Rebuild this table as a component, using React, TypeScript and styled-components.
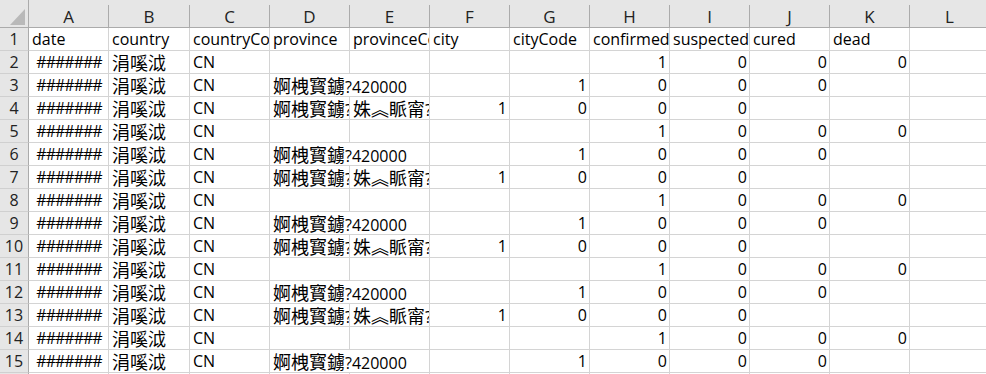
import styled, { createGlobalStyle } from "styled-components";

const GlobalStyle = createGlobalStyle`
  html, body {
    margin: 0;
    padding: 0;
    background: #ffffff;
    overflow: hidden;
  }
  body {
    font-family: "Open Sans", "Noto Sans CJK SC", sans-serif;
    color: #000000;
  }
`;

const COLUMNS = ["A", "B", "C", "D", "E", "F", "G", "H", "I", "J", "K", "L"];

type Align = "left" | "right" | "center";

type CellData = {
  text: string;
  align?: Align;
  span?: number;
  hash?: boolean;
};

type Row = Record<string, CellData>;

const HEADER: Row = {
  A: { text: "date" },
  B: { text: "country" },
  C: { text: "countryCode" },
  D: { text: "province" },
  E: { text: "provinceCode" },
  F: { text: "city" },
  G: { text: "cityCode" },
  H: { text: "confirmed" },
  I: { text: "suspected" },
  J: { text: "cured" },
  K: { text: "dead" },
};

const num = (text: string): CellData => ({ text, align: "right" });

const base: Row = {
  A: { text: "#######", align: "center", hash: true },
  B: { text: "涓嗘泧" },
  C: { text: "CN" },
};

const TOTAL: Row = { ...base, H: num("1"), I: num("0"), J: num("0"), K: num("0") };

const PROVINCE: Row = {
  ...base,
  D: { text: "婀栧寳鐪?420000", span: 2 },
  G: num("1"),
  H: num("0"),
  I: num("0"),
  J: num("0"),
};

const CITY: Row = {
  ...base,
  D: { text: "婀栧寳鐪?420000" },
  E: { text: "姝︽眽甯?420100" },
  F: num("1"),
  G: num("0"),
  H: num("0"),
  I: num("0"),
};

const ROWS: Row[] = [HEADER];
for (let i = 0; i < 15; i++) {
  ROWS.push([TOTAL, PROVINCE, CITY][i % 3]);
}

// split latin and han runs so the han text can use its own size
function renderText(text: string) {
  const parts = text.split(/([\u3000-\u9fff\ufe30-\ufe4f]+)/);
  return parts.map((part, i) =>
    i % 2 === 1 ? <Han key={i}>{part}</Han> : <span key={i}>{part}</span>
  );
}

function App() {
  return (
    <>
      <GlobalStyle />
      <Sheet>
        <Corner>
          <svg width="15" height="16" viewBox="0 0 15 16">
            <polygon points="15,0 15,16 0,16" fill="#b9b9b9" />
          </svg>
        </Corner>
        {COLUMNS.map((col) => (
          <ColHeader key={col}>
            <ColLabel>{col}</ColLabel>
          </ColHeader>
        ))}

        {ROWS.map((row, r) => {
          const cells = [];
          let skip = 0;
          for (const col of COLUMNS) {
            if (skip > 0) {
              skip--;
              continue;
            }
            const cell = row[col];
            const span = cell?.span ?? 1;
            skip = span - 1;
            cells.push(
              <Cell key={col} $align={cell?.align ?? "left"} $span={span}>
                {cell &&
                  (cell.hash ? (
                    <Hash>{cell.text}</Hash>
                  ) : (
                    <CellText>{renderText(cell.text)}</CellText>
                  ))}
              </Cell>
            );
          }
          return [
            <RowHeader key={`h${r}`}>{r + 1}</RowHeader>,
            ...cells,
          ];
        })}
        <RowHeader>16</RowHeader>
      </Sheet>
    </>
  );
}

const Sheet = styled.div`
  display: grid;
  grid-template-columns: 29px 80px 81px repeat(10, 80px);
  grid-template-rows: 28px;
  grid-auto-rows: 23px;
  width: 986px;
  height: 374px;
  overflow: hidden;
  font-size: 16px;
`;

const HeaderBase = styled.div`
  box-sizing: border-box;
  background: #e6e6e6;
  color: #222222;
`;

const Corner = styled(HeaderBase)`
  display: flex;
  justify-content: flex-end;
  align-items: flex-end;
  padding: 0 3px 2px 0;
  border-right: 1px solid #ababab;
  border-bottom: 1px solid #ababab;
`;

const ColHeader = styled(HeaderBase)`
  display: flex;
  flex-direction: column;
  border-bottom: 1px solid #ababab;
  padding-top: 5px;
`;

const ColLabel = styled.div`
  flex: 1;
  display: flex;
  align-items: center;
  justify-content: center;
  border-right: 1px solid #ababab;
  font-size: 17px;
  line-height: 20px;
  padding-top: 1px;
`;

const RowHeader = styled(HeaderBase)`
  display: flex;
  align-items: flex-end;
  justify-content: center;
  border-right: 1px solid #ababab;
  border-bottom: 1px solid #d0d0d0;
  font-size: 16px;
  line-height: 21px;
`;

const Cell = styled.div<{ $align: Align; $span: number }>`
  grid-column: span ${(p) => p.$span};
  box-sizing: border-box;
  display: flex;
  align-items: flex-end;
  justify-content: ${(p) =>
    p.$align === "right"
      ? "flex-end"
      : p.$align === "center"
      ? "center"
      : "flex-start"};
  padding: 0 ${(p) => (p.$align === "right" ? "2px" : "3px")};
  border-right: 1px solid #d4d4d4;
  border-bottom: 1px solid #d4d4d4;
  overflow: hidden;
  white-space: nowrap;
  min-width: 0;
`;

const CellText = styled.div`
  line-height: 21px;
  height: 21px;
  white-space: nowrap;
`;

const Han = styled.span`
  font-family: "Noto Sans CJK SC", sans-serif;
  font-size: 18px;
  vertical-align: baseline;
`;

const Hash = styled.div`
  line-height: 21px;
  letter-spacing: -1px;
  padding-left: 1px;
`;

export default App;
